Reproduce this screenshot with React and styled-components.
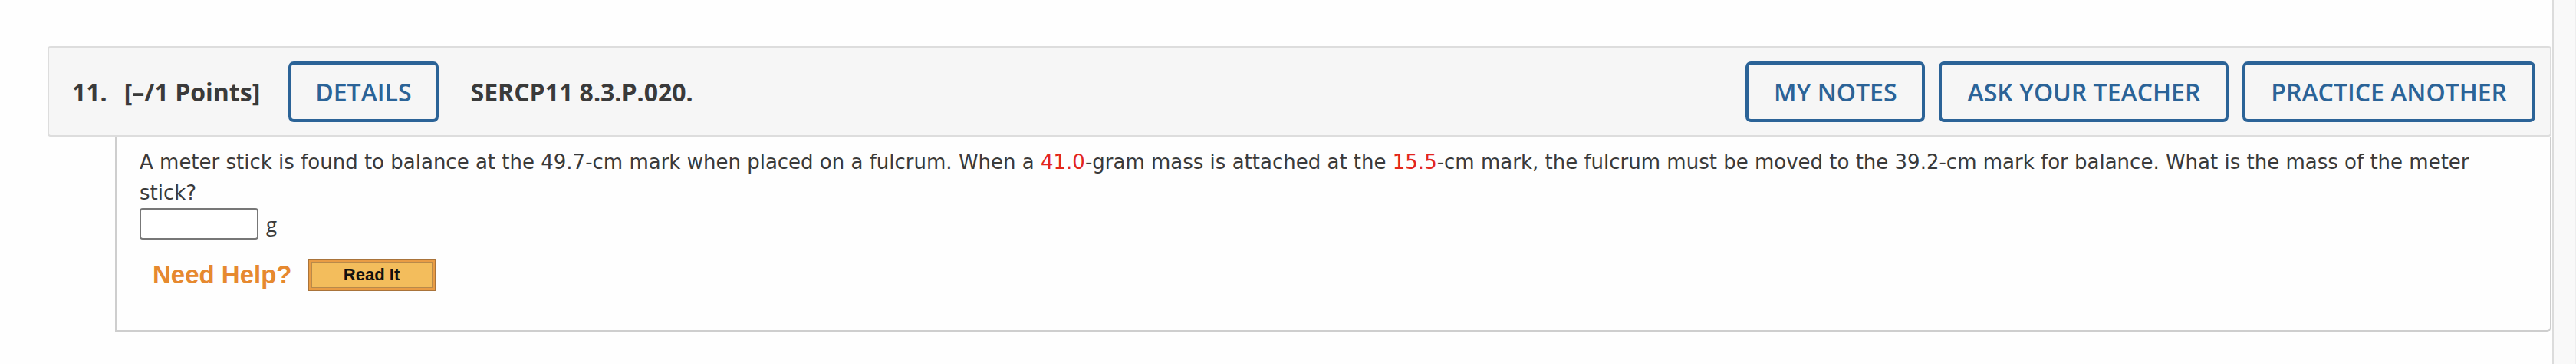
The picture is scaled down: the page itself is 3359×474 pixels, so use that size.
import React from 'react';
import styled, { createGlobalStyle } from 'styled-components';

const colors = {
    text: '#3a3a3a',
    blue: '#2b6397',
    red: '#e3261c',
    orange: '#e6892f',
    headerBg: '#f6f6f6',
    headerBorder: '#dddddd',
    bodyBorder: '#cecece',
};

const GlobalStyle = createGlobalStyle`
    html, body {
        margin: 0;
        padding: 0;
        background: #ffffff;
    }
`

const Page = styled.div`
    display: flex;
    width: 3359px;
    height: 474px;
    overflow: hidden;
    background: #fefefe;
`

const Main = styled.div`
    flex: 1;
    padding: 60px 1px 0 62px;
    display: flex;
    flex-direction: column;
`

const Gutter = styled.div`
    width: 28px;
    background: #f9f9f9;
    border-left: 2px solid #dcdcdc;
    border-right: 1px solid #eeeeee;
`

const Header = styled.div`
    box-sizing: border-box;
    height: 118px;
    display: flex;
    align-items: center;
    padding: 0 19px 0 30px;
    background: ${colors.headerBg};
    border: 2px solid ${colors.headerBorder};
    border-radius: 4px;
    font-family: "Open Sans", sans-serif;
    font-size: 32px;
    color: ${colors.text};
`

const Title = styled.span`
    font-weight: 700;
    margin-right: ${props => props.gap || 0}px;
    white-space: nowrap;
`

const Actions = styled.div`
    margin-left: auto;
    display: flex;
    gap: 18px;
`

const OutlineButton = styled.button`
    box-sizing: border-box;
    height: 79px;
    padding: 0 ${props => props.pad || 33}px;
    margin-right: ${props => props.gap || 0}px;
    display: inline-flex;
    align-items: center;
    background: transparent;
    border: 4px solid ${colors.blue};
    border-radius: 7px;
    font-family: "Open Sans", sans-serif;
    font-size: 32px;
    font-weight: 600;
    color: ${colors.blue};
    white-space: nowrap;
`

const Body = styled.div`
    margin-left: 88px;
    padding: 13px 30px 51px 30px;
    border: 2px solid ${colors.bodyBorder};
    border-top: none;
    border-bottom-right-radius: 6px;
    font-family: "DejaVu Sans", Verdana, sans-serif;
    font-size: 26px;
    line-height: 40px;
    color: ${colors.text};
`

const Question = styled.p`
    margin: 0;
`

const Value = styled.span`
    color: ${colors.red};
`

const AnswerRow = styled.div`
    display: flex;
    align-items: center;
    gap: 10px;
`

const AnswerInput = styled.input`
    box-sizing: border-box;
    width: 155px;
    height: 41px;
    border: 2px solid #777777;
    border-radius: 4px;
    background: #ffffff;
`

const Unit = styled.span`
    font-family: "Open Sans", sans-serif;
`

const HelpRow = styled.div`
    display: flex;
    align-items: center;
    gap: 21px;
    margin-top: 25px;
    padding-left: 17px;
`

const NeedHelp = styled.span`
    font-family: "Liberation Sans", Arial, sans-serif;
    font-weight: 700;
    font-size: 33px;
    line-height: 42px;
    color: ${colors.orange};
`

const ReadIt = styled.div`
    box-sizing: border-box;
    width: 166px;
    height: 42px;
    padding: 3px;
    background: #e99c44;
    border: 1px solid #a9733a;
    display: flex;
`

const ReadItFace = styled.span`
    flex: 1;
    display: flex;
    align-items: center;
    justify-content: center;
    background: #f3bd5c;
    border: 1px solid #b98a4a;
    font-family: "Liberation Sans", Arial, sans-serif;
    font-weight: 700;
    font-size: 22px;
    color: #111111;
`

const App = () => {
    return (
        <Page>
            <GlobalStyle />
            <Main>
                <Header>
                    <Title gap={22}>11.</Title>
                    <Title gap={37}>[–/1 Points]</Title>
                    <OutlineButton pad={31} gap={42}>DETAILS</OutlineButton>
                    <Title>SERCP11 8.3.P.020.</Title>
                    <Actions>
                        <OutlineButton>MY NOTES</OutlineButton>
                        <OutlineButton>ASK YOUR TEACHER</OutlineButton>
                        <OutlineButton>PRACTICE ANOTHER</OutlineButton>
                    </Actions>
                </Header>
                <Body>
                    <Question>
                        A meter stick is found to balance at the 49.7-cm mark when placed on a fulcrum. When a <Value>41.0</Value>-gram mass is attached at the <Value>15.5</Value>-cm mark, the fulcrum must be moved to the 39.2-cm mark for balance. What is the mass of the meter stick?
                    </Question>
                    <AnswerRow>
                        <AnswerInput type="text" />
                        <Unit>g</Unit>
                    </AnswerRow>
                    <HelpRow>
                        <NeedHelp>Need Help?</NeedHelp>
                        <ReadIt>
                            <ReadItFace>Read It</ReadItFace>
                        </ReadIt>
                    </HelpRow>
                </Body>
            </Main>
            <Gutter />
        </Page>
    )
}

export default App;
